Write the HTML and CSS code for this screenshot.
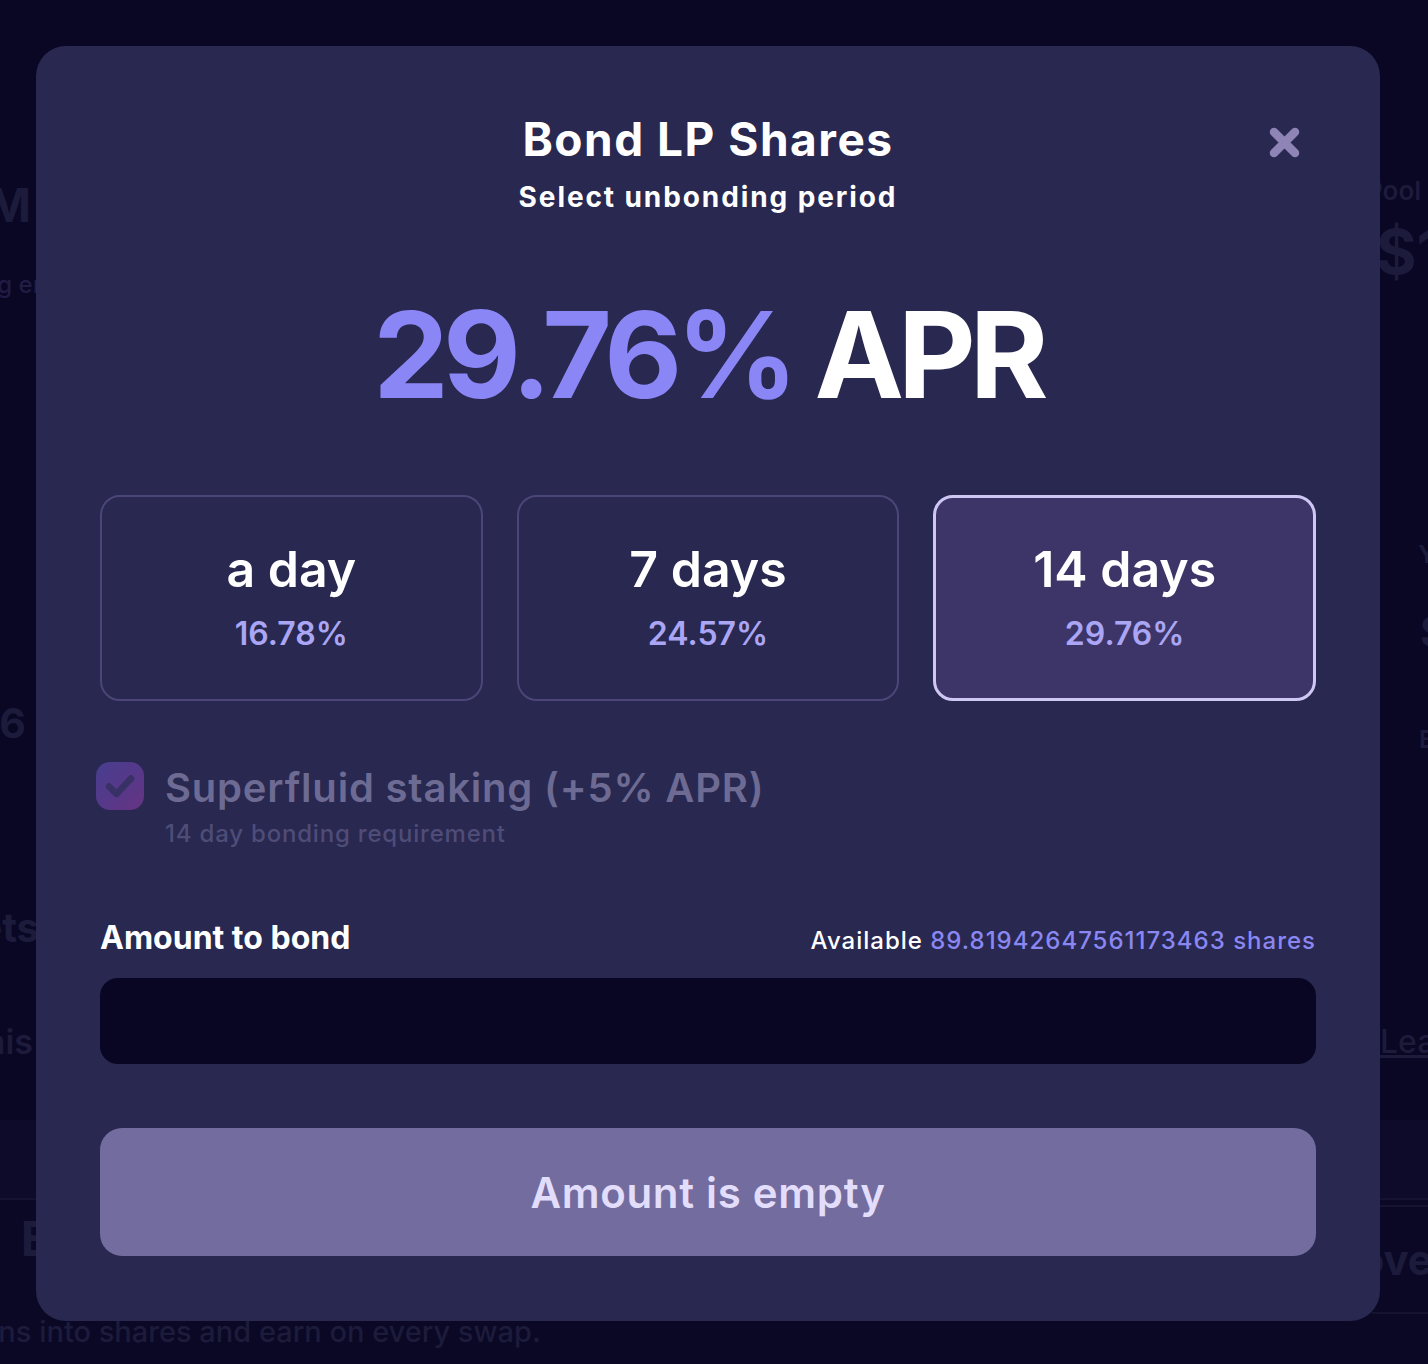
FILE: index.html
```html
<!DOCTYPE html>
<html lang="en">
<head>
<meta charset="utf-8">
<title>Bond LP Shares</title>
<link rel="stylesheet" href="styles.css">
</head>
<body>
<div class="page">
  <div class="page-top">
    <div class="side side-left">
      <div class="frag frag-m"><span>OSM</span></div>
      <div class="frag frag-ger"><span>Unbonding er</span></div>
      <div class="frag frag-6"><span>$1,296</span></div>
      <div class="frag frag-ets"><span>Assets</span></div>
      <div class="frag frag-nis"><span>this</span></div>
    </div>
    <div class="page-gap"></div>
    <div class="side side-right">
      <div class="frag frag-ool"><span>Pool</span></div>
      <div class="frag frag-usd"><span>$1,204,381</span></div>
      <div class="frag frag-y"><span>Your</span></div>
      <div class="frag frag-9"><span>$94.21</span></div>
      <div class="frag frag-e"><span>Bonded</span></div>
      <div class="frag frag-lea"><span>Learn more</span></div>
    </div>
  </div>
  <div class="page-band"></div>
  <div class="page-bottom">
    <div class="bottom-row">
      <div class="side side-left">
        <div class="frag frag-E"><span>E</span></div>
      </div>
      <div class="page-gap"></div>
      <div class="side side-right">
        <div class="remove-box"><span>Remove</span></div>
      </div>
    </div>
    <p class="foot">Bond tokens into shares and earn on every swap.</p>
  </div>
</div>

<div class="overlay">
  <section class="modal">
    <header class="modal-head">
      <div class="head-spacer"></div>
      <div class="head-titles">
        <h1 class="title">Bond LP Shares</h1>
        <p class="subtitle">Select unbonding period</p>
      </div>
      <button class="close" aria-label="Close">
        <svg width="31" height="31" viewBox="0 0 31 31" fill="none">
          <path d="M5 5 L26 26 M26 5 L5 26" stroke="#8e84b6" stroke-width="8.5" stroke-linecap="round"/>
        </svg>
      </button>
    </header>

    <div class="apr"><span class="apr-num">29.76%</span> APR</div>

    <div class="periods">
      <div class="period">
        <div class="period-label">a day</div>
        <div class="period-rate">16.78%</div>
      </div>
      <div class="period">
        <div class="period-label">7 days</div>
        <div class="period-rate">24.57%</div>
      </div>
      <div class="period period-selected">
        <div class="period-label">14 days</div>
        <div class="period-rate">29.76%</div>
      </div>
    </div>

    <div class="superfluid">
      <div class="check">
        <svg width="48" height="48" viewBox="0 0 48 48" fill="none">
          <path d="M13 24.5 L20.5 32 L35 16.5" stroke="#383166" stroke-width="6.5" stroke-linecap="round" stroke-linejoin="round"/>
        </svg>
      </div>
      <div class="sf-text">
        <div class="sf-title">Superfluid staking (+5% APR)</div>
        <div class="sf-sub">14 day bonding requirement</div>
      </div>
    </div>

    <div class="amount-head">
      <span class="amount-label">Amount to bond</span>
      <span class="avail">Available <span class="avail-num">89.81942647561173463 shares</span></span>
    </div>
    <div class="amount-input"></div>

    <button class="submit">Amount is empty</button>
  </section>
</div>
</body>
</html>
```

FILE: styles.css
```css
html, body {
  margin: 0;
  padding: 0;
}

body {
  background: #090723;
  font-family: Inter, "Noto Sans", "Liberation Sans", sans-serif;
  overflow: hidden;
  width: 1428px;
  height: 1364px;
}

/* ---------- background page (under overlay) ---------- */
.page {
  display: flex;
  flex-direction: column;
  height: 1364px;
  color: #1d1b3b;
  font-weight: 700;
}

.page-top {
  height: 1120px;
  display: flex;
}

.page-gap {
  flex: 1;
}

.side {
  display: flex;
  flex-direction: column;
  overflow: hidden;
}

.side-left {
  width: 36px;
}

.side-right {
  width: 56px;
}

.frag {
  white-space: nowrap;
  display: flex;
}

.side-left .frag {
  justify-content: flex-end;
}

.frag-m { margin-top: 181px; height: 48px; font-size: 47px; line-height: 48px; margin-right: 5px; }
.frag-ger { margin-top: 41px; height: 30px; font-size: 24px; line-height: 30px; font-weight: 500; color: #221b44; margin-right: -6px; }
.frag-6 { margin-top: 401px; height: 44px; font-size: 41px; line-height: 44px; margin-right: 10px; }
.frag-ets { margin-top: 158px; height: 50px; font-size: 40px; line-height: 50px; margin-right: -3px; }
.frag-nis { margin-top: 69px; height: 40px; font-size: 34px; line-height: 40px; font-weight: 600; margin-right: 3px; }

.frag-ool { margin-top: 176px; height: 30px; font-size: 26px; line-height: 30px; font-weight: 600; margin-left: -6px; }
.frag-usd { margin-top: 11px; height: 70px; font-size: 62px; line-height: 70px; margin-left: 4px; }
.frag-y { margin-top: 253px; height: 30px; font-size: 24px; line-height: 30px; margin-left: 46px; }
.frag-9 { margin-top: 40px; height: 44px; font-size: 42px; line-height: 44px; margin-left: 48px; }
.frag-e { margin-top: 71px; height: 30px; font-size: 24px; line-height: 30px; margin-left: 47px; }
.frag-lea { margin-top: 267px; height: 40px; font-size: 32px; line-height: 40px; font-weight: 500; text-decoration: underline; margin-left: 8px; }

.page-band {
  height: 78px;
  background: #0d0b29;
  border-bottom: 2px solid #14122f;
}

.page-bottom {
  flex: 1;
  display: flex;
  flex-direction: column;
  background: #0a0825;
}

.bottom-row {
  display: flex;
  height: 114px;
}

.frag-E { margin-top: 11px; height: 56px; font-size: 48px; line-height: 56px; margin-right: -14px; }

.remove-box {
  margin-top: 5px;
  margin-left: -150px;
  height: 120px;
  border: 2px solid #15132f;
  border-radius: 22px;
  display: flex;
  align-items: center;
  padding-left: 44px;
  font-size: 42px;
  white-space: nowrap;
  box-sizing: border-box;
  width: 400px;
}

.foot {
  margin: 0 0 0 -141px;
  font-size: 29px;
  line-height: 36px;
  font-weight: 500;
  color: #1d1b3b;
  white-space: nowrap;
}

/* ---------- overlay / modal ---------- */
.overlay {
  position: fixed;
  inset: 0;
  padding: 46px 48px 0 36px;
}

.modal {
  background: #282850;
  border-radius: 30px;
  padding: 67px 64px 65px;
  color: #ffffff;
}

.modal-head {
  display: grid;
  grid-template-columns: 1fr auto 1fr;
  align-items: start;
}

.head-titles {
  text-align: center;
}

.title {
  margin: 0;
  font-size: 46px;
  line-height: 52px;
  font-weight: 700;
  letter-spacing: 1.5px;
}

.subtitle {
  margin: 17px 0 0;
  font-size: 28px;
  line-height: 30px;
  font-weight: 700;
  letter-spacing: 1.9px;
}

.close {
  justify-self: end;
  margin: 14px 16px 0 0;
  padding: 0;
  width: 31px;
  height: 31px;
  border: none;
  background: none;
  display: flex;
}

.apr {
  margin-top: 83px;
  text-align: center;
  font-size: 120px;
  line-height: 120px;
  font-weight: 700;
  letter-spacing: -6px;
  color: #ffffff;
}

.apr-num {
  color: #8a86f6;
}

.periods {
  margin-top: 80px;
  display: grid;
  grid-template-columns: repeat(3, 1fr);
  gap: 34px;
}

.period {
  height: 206px;
  box-sizing: border-box;
  border: 2px solid #4b4677;
  border-radius: 20px;
  display: flex;
  flex-direction: column;
  align-items: center;
  justify-content: center;
  gap: 15px;
  padding-bottom: 4px;
}

.period-selected {
  border: 3px solid #cfc7f3;
  background: #3d3567;
}

.period-label {
  font-size: 50px;
  line-height: 60px;
  font-weight: 600;
  color: #ffffff;
}

.period-rate {
  font-size: 32px;
  line-height: 40px;
  font-weight: 600;
  color: #aaa6f5;
}

.superfluid {
  margin-top: 61px;
  margin-left: -4px;
  display: flex;
  gap: 21px;
  align-items: flex-start;
}

.check {
  width: 48px;
  height: 48px;
  border-radius: 14px;
  background: linear-gradient(135deg, #483e8e 0%, #573889 55%, #673483 100%);
  flex: none;
  display: flex;
}

.sf-title {
  font-size: 40px;
  line-height: 52px;
  font-weight: 600;
  letter-spacing: 0.8px;
  color: #6d6b93;
}

.sf-sub {
  margin-top: 6px;
  font-size: 24px;
  line-height: 28px;
  font-weight: 500;
  letter-spacing: 0.8px;
  color: #4f4d78;
}

.amount-head {
  margin-top: 72px;
  display: flex;
  justify-content: space-between;
  align-items: baseline;
}

.amount-label {
  font-size: 32px;
  line-height: 36px;
  font-weight: 700;
}

.avail {
  font-size: 24px;
  font-weight: 500;
  letter-spacing: 1px;
  color: #ffffff;
}

.avail-num {
  color: #8a87f2;
}

.amount-input {
  margin-top: 22px;
  height: 86px;
  border-radius: 18px;
  background: #080622;
}

.submit {
  margin-top: 64px;
  display: block;
  width: 100%;
  height: 128px;
  border: none;
  border-radius: 22px;
  background: #736c9e;
  color: #e3ddfc;
  font-family: Inter, "Noto Sans", sans-serif;
  font-size: 42px;
  font-weight: 600;
  letter-spacing: 0.7px;
}
```
